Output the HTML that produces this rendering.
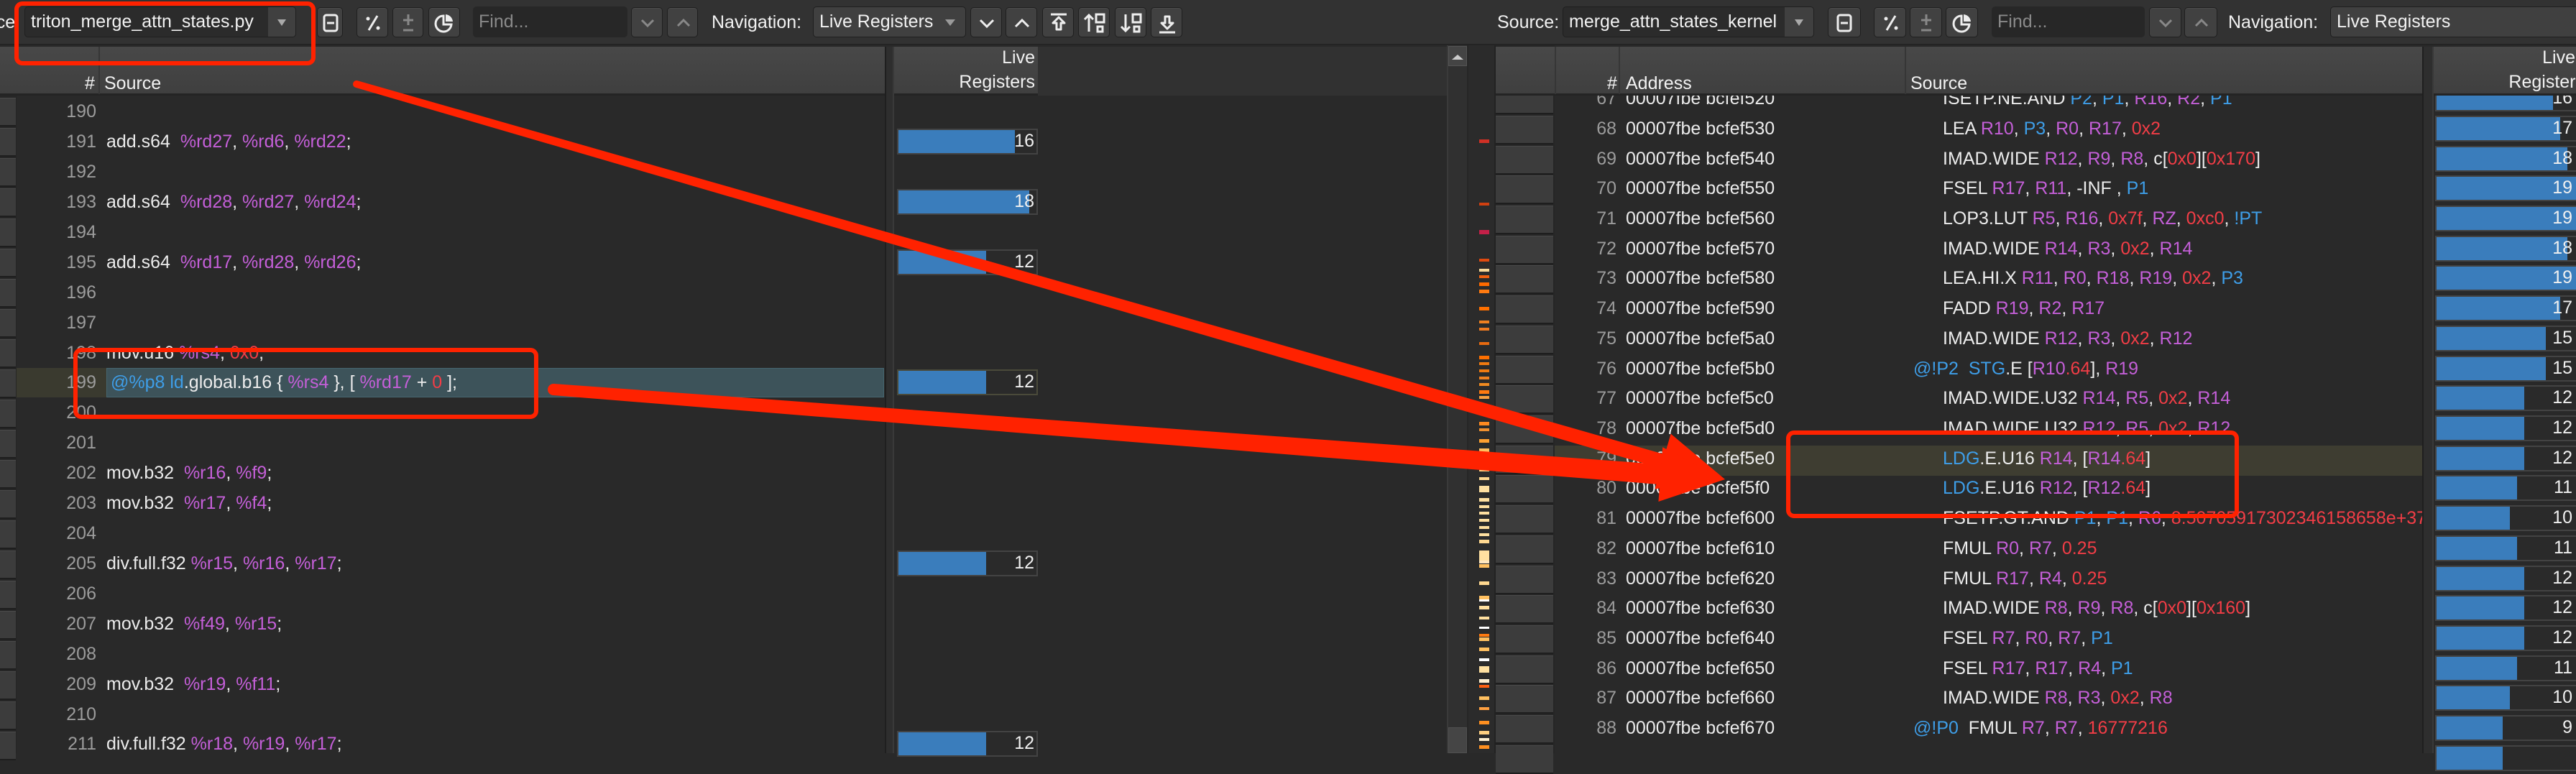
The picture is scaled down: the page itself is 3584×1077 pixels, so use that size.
<!DOCTYPE html>
<html><head><meta charset="utf-8"><style>
*{margin:0;padding:0;box-sizing:border-box}
body{width:3584px;height:1048px;background:#292929;position:relative;overflow:hidden;font-family:"Liberation Sans",sans-serif;color:#ececec;font-size:25px}
.a{position:absolute}
.tb{left:0;top:0;width:3584px;height:63px;background:#323232;border-bottom:2px solid #242424}
.btn{position:absolute;top:10px;height:42px;background:#414141;border:1px solid #1f1f1f;border-radius:5px;box-shadow:inset 0 1px 0 #4c4c4c}
.btn svg{position:absolute;left:0;top:0}
.dd{position:absolute;top:9px;height:43px;background:#2b2b2b;border:1px solid #1f1f1f;border-radius:5px;font-size:25px;line-height:41px;padding-left:8px;color:#f2f2f2;overflow:hidden;white-space:nowrap}
.ddb{background:#404040}
.find{position:absolute;top:9px;height:43px;background:#272727;border-radius:5px;color:#8a8a8a;font-size:25px;line-height:43px;padding-left:8px}
.lbl{position:absolute;top:0;line-height:62px;font-size:25px;color:#f2f2f2;white-space:nowrap}
.hdr{position:absolute;top:65px;height:68px;background:linear-gradient(#484848,#3f3f3f);border-bottom:3px solid #242424}
.ht{position:absolute;font-size:25px;color:#f2f2f2;white-space:nowrap}
.row{position:absolute;height:42px;line-height:42px;white-space:nowrap}
.ln{position:absolute;text-align:right;color:#9c9c9c}
.p{color:#c45fd8}.b{color:#3e9ee8}.r{color:#f23d46}
.gb{position:absolute;background:#3c3c3c;border-top:1px solid #4a4a4a;border-bottom:2px solid #1e1e1e}
.lb{position:absolute;height:36px;border:2px solid #434343;background:#2a2a2a}
.lb i{position:absolute;left:0;top:0;bottom:0;background:#3a7dbc}
.lb s{position:absolute;right:3px;top:-3px;text-decoration:none;line-height:36px;color:#f0f0f0}
.mm{position:absolute;left:2058px;width:14px}
</style></head><body>

<!-- toolbar -->
<div class="a tb"></div>
<div class="lbl" style="left:-58px">Source:</div>
<div class="dd" style="left:34px;width:378px">triton_merge_attn_states.py<div class="a ddb" style="right:0;top:0;width:38px;height:41px;"><svg width="38" height="41"><path d="M13 17h12l-6 9z" fill="#aaa"/></svg></div></div>
<div class="btn" style="left:441px;width:36px"><svg width="36" height="42"><rect x="9" y="10" width="18" height="22" rx="3" fill="none" stroke="#eee" stroke-width="3"/><path d="M13 21h10" stroke="#eee" stroke-width="3"/></svg></div>
<div class="btn" style="left:496px;width:44px"><svg width="44" height="42"><path d="M28 11L16 31" stroke="#eee" stroke-width="3"/><circle cx="15" cy="15" r="2.5" fill="#eee"/><circle cx="29" cy="28" r="2.5" fill="#eee"/></svg></div>
<div class="btn" style="left:546px;width:43px"><svg width="43" height="42"><path d="M21 9v15M14 17h14M14 31h14" stroke="#888" stroke-width="3"/></svg></div>
<div class="btn" style="left:596px;width:44px"><svg width="44" height="42"><path d="M20 11a11 11 0 1 0 11 12h-11z" fill="none" stroke="#eee" stroke-width="3"/><path d="M23 9a11 11 0 0 1 10 10h-10z" fill="#eee"/></svg></div>
<div class="find" style="left:658px;width:215px">Find...</div>
<div class="btn" style="left:878px;width:44px"><svg width="44" height="42"><path d="M14 17l8 8 8-8" fill="none" stroke="#888" stroke-width="3"/></svg></div>
<div class="btn" style="left:928px;width:43px"><svg width="43" height="42"><path d="M14 25l8-8 8 8" fill="none" stroke="#888" stroke-width="3"/></svg></div>
<div class="lbl" style="left:990px">Navigation:</div>
<div class="dd" style="left:1131px;width:213px;background:#404040">Live Registers<svg class="a" style="right:6px;top:0" width="30" height="41"><path d="M8 17h14l-7 9z" fill="#999"/></svg></div>
<div class="btn" style="left:1350px;width:44px"><svg width="44" height="42"><path d="M13 17l9 9 9-9" fill="none" stroke="#eee" stroke-width="3"/></svg></div>
<div class="btn" style="left:1399px;width:44px"><svg width="44" height="42"><path d="M13 26l9-9 9 9" fill="none" stroke="#eee" stroke-width="3"/></svg></div>
<div class="btn" style="left:1450px;width:44px"><svg width="44" height="42"><path d="M11 9h22M22 13l-8 8h5v9h6v-9h5z" fill="none" stroke="#eee" stroke-width="3" stroke-linejoin="round"/></svg></div>
<div class="btn" style="left:1500px;width:44px"><svg width="44" height="42"><path d="M14 33V10M8 16l6-6 6 6" fill="none" stroke="#eee" stroke-width="3"/><rect x="24" y="9" width="11" height="11" fill="none" stroke="#eee" stroke-width="3"/><rect x="26" y="26" width="7" height="7" fill="none" stroke="#eee" stroke-width="3"/></svg></div>
<div class="btn" style="left:1551px;width:44px"><svg width="44" height="42"><path d="M14 9v23M8 26l6 6 6-6" fill="none" stroke="#eee" stroke-width="3"/><rect x="24" y="9" width="11" height="11" fill="none" stroke="#eee" stroke-width="3"/><rect x="26" y="26" width="7" height="7" fill="none" stroke="#eee" stroke-width="3"/></svg></div>
<div class="btn" style="left:1601px;width:44px"><svg width="44" height="42"><path d="M11 34h22M22 29l-8-8h5v-9h6v9h5z" fill="none" stroke="#eee" stroke-width="3" stroke-linejoin="round"/></svg></div>

<div class="lbl" style="left:2083px">Source:</div>
<div class="dd" style="left:2174px;width:350px">merge_attn_states_kernel<div class="a ddb" style="right:0;top:0;width:40px;height:41px;"><svg width="40" height="41"><path d="M14 17h12l-6 9z" fill="#aaa"/></svg></div></div>
<div class="btn" style="left:2543px;width:46px"><svg width="46" height="42"><rect x="13" y="10" width="18" height="22" rx="3" fill="none" stroke="#eee" stroke-width="3"/><path d="M17 21h10" stroke="#eee" stroke-width="3"/></svg></div>
<div class="btn" style="left:2607px;width:45px"><svg width="45" height="42"><path d="M29 11L17 31" stroke="#eee" stroke-width="3"/><circle cx="16" cy="15" r="2.5" fill="#eee"/><circle cx="30" cy="28" r="2.5" fill="#eee"/></svg></div>
<div class="btn" style="left:2657px;width:45px"><svg width="45" height="42"><path d="M22 9v15M15 17h14M15 31h14" stroke="#888" stroke-width="3"/></svg></div>
<div class="btn" style="left:2707px;width:45px"><svg width="45" height="42"><path d="M21 11a11 11 0 1 0 11 12h-11z" fill="none" stroke="#eee" stroke-width="3"/><path d="M24 9a11 11 0 0 1 10 10h-10z" fill="#eee"/></svg></div>
<div class="find" style="left:2771px;width:213px">Find...</div>
<div class="btn" style="left:2990px;width:45px"><svg width="45" height="42"><path d="M14 17l8 8 8-8" fill="none" stroke="#888" stroke-width="3"/></svg></div>
<div class="btn" style="left:3039px;width:46px"><svg width="46" height="42"><path d="M15 25l8-8 8 8" fill="none" stroke="#888" stroke-width="3"/></svg></div>
<div class="lbl" style="left:3100px">Navigation:</div>
<div class="dd" style="left:3242px;width:360px;background:#404040">Live Registers</div>

<!-- LEFT PANEL -->
<div class="a" style="left:0;top:133px;width:23px;height:915px;background:#262626"></div>
<div class="hdr" style="left:0;width:1231px"></div>
<div class="a" style="left:137px;top:65px;width:2px;height:66px;background:#363636"></div>
<div class="ht" style="left:118px;top:102px">#</div>
<div class="ht" style="left:145px;top:102px">Source</div>
<div class="a" style="left:1231px;top:65px;width:13px;height:983px;background:#2e2e2e;border-left:2px solid #1f1f1f;border-right:2px solid #393939"></div>
<div class="hdr" style="left:1244px;width:200px"></div>
<div class="ht" style="left:1244px;width:196px;text-align:right;top:66px">Live</div>
<div class="ht" style="left:1244px;width:196px;text-align:right;top:100px">Registers</div>
<div class="a" style="left:1444px;top:65px;width:570px;height:68px;background:#313131"></div>

<!-- left gutter boxes -->
<div class="gb" style="left:0;top:136px;width:22px;height:40px"></div>
<div class="gb" style="left:0;top:178px;width:22px;height:40px"></div>
<div class="gb" style="left:0;top:220px;width:22px;height:40px"></div>
<div class="gb" style="left:0;top:262px;width:22px;height:40px"></div>
<div class="gb" style="left:0;top:304px;width:22px;height:40px"></div>
<div class="gb" style="left:0;top:346px;width:22px;height:40px"></div>
<div class="gb" style="left:0;top:388px;width:22px;height:40px"></div>
<div class="gb" style="left:0;top:430px;width:22px;height:40px"></div>
<div class="gb" style="left:0;top:472px;width:22px;height:40px"></div>
<div class="gb" style="left:0;top:514px;width:22px;height:40px"></div>
<div class="gb" style="left:0;top:556px;width:22px;height:40px"></div>
<div class="gb" style="left:0;top:598px;width:22px;height:40px"></div>
<div class="gb" style="left:0;top:640px;width:22px;height:40px"></div>
<div class="gb" style="left:0;top:682px;width:22px;height:40px"></div>
<div class="gb" style="left:0;top:724px;width:22px;height:40px"></div>
<div class="gb" style="left:0;top:766px;width:22px;height:40px"></div>
<div class="gb" style="left:0;top:808px;width:22px;height:40px"></div>
<div class="gb" style="left:0;top:850px;width:22px;height:40px"></div>
<div class="gb" style="left:0;top:892px;width:22px;height:40px"></div>
<div class="gb" style="left:0;top:934px;width:22px;height:40px"></div>
<div class="gb" style="left:0;top:976px;width:22px;height:40px"></div>
<div class="gb" style="left:0;top:1018px;width:22px;height:40px"></div>

<!-- highlight 199 -->
<div class="a" style="left:23px;top:512px;width:125px;height:41px;background:#3a3a2f"></div>
<div class="a" style="left:148px;top:512px;width:1082px;height:41px;background:#3d535a;border:1px solid #466670"></div>

<div class="row" style="left:0;top:134px"><span class="ln" style="left:40px;width:94px">190</span></div>
<div class="row" style="left:0;top:176px"><span class="ln" style="left:40px;width:94px">191</span><span class="a" style="left:148px">add.s64&nbsp; <span class="p">%rd27</span>, <span class="p">%rd6</span>, <span class="p">%rd22</span>;</span></div>
<div class="row" style="left:0;top:218px"><span class="ln" style="left:40px;width:94px">192</span></div>
<div class="row" style="left:0;top:260px"><span class="ln" style="left:40px;width:94px">193</span><span class="a" style="left:148px">add.s64&nbsp; <span class="p">%rd28</span>, <span class="p">%rd27</span>, <span class="p">%rd24</span>;</span></div>
<div class="row" style="left:0;top:302px"><span class="ln" style="left:40px;width:94px">194</span></div>
<div class="row" style="left:0;top:344px"><span class="ln" style="left:40px;width:94px">195</span><span class="a" style="left:148px">add.s64&nbsp; <span class="p">%rd17</span>, <span class="p">%rd28</span>, <span class="p">%rd26</span>;</span></div>
<div class="row" style="left:0;top:386px"><span class="ln" style="left:40px;width:94px">196</span></div>
<div class="row" style="left:0;top:428px"><span class="ln" style="left:40px;width:94px">197</span></div>
<div class="row" style="left:0;top:470px"><span class="ln" style="left:40px;width:94px">198</span><span class="a" style="left:148px">mov.u16 <span class="p">%rs4</span>, <span class="r">0x0</span>;</span></div>
<div class="row" style="left:0;top:511px"><span class="ln" style="left:40px;width:94px">199</span><span class="a" style="left:154px"><span class="b">@%p8</span> <span class="b">ld</span>.global.b16 { <span class="p">%rs4</span> }, [ <span class="p">%rd17</span> + <span class="r">0</span> ];</span></div>
<div class="row" style="left:0;top:553px"><span class="ln" style="left:40px;width:94px">200</span></div>
<div class="row" style="left:0;top:595px"><span class="ln" style="left:40px;width:94px">201</span></div>
<div class="row" style="left:0;top:637px"><span class="ln" style="left:40px;width:94px">202</span><span class="a" style="left:148px">mov.b32&nbsp; <span class="p">%r16</span>, <span class="p">%f9</span>;</span></div>
<div class="row" style="left:0;top:679px"><span class="ln" style="left:40px;width:94px">203</span><span class="a" style="left:148px">mov.b32&nbsp; <span class="p">%r17</span>, <span class="p">%f4</span>;</span></div>
<div class="row" style="left:0;top:721px"><span class="ln" style="left:40px;width:94px">204</span></div>
<div class="row" style="left:0;top:763px"><span class="ln" style="left:40px;width:94px">205</span><span class="a" style="left:148px">div.full.f32 <span class="p">%r15</span>, <span class="p">%r16</span>, <span class="p">%r17</span>;</span></div>
<div class="row" style="left:0;top:805px"><span class="ln" style="left:40px;width:94px">206</span></div>
<div class="row" style="left:0;top:847px"><span class="ln" style="left:40px;width:94px">207</span><span class="a" style="left:148px">mov.b32&nbsp; <span class="p">%f49</span>, <span class="p">%r15</span>;</span></div>
<div class="row" style="left:0;top:889px"><span class="ln" style="left:40px;width:94px">208</span></div>
<div class="row" style="left:0;top:931px"><span class="ln" style="left:40px;width:94px">209</span><span class="a" style="left:148px">mov.b32&nbsp; <span class="p">%r19</span>, <span class="p">%f11</span>;</span></div>
<div class="row" style="left:0;top:973px"><span class="ln" style="left:40px;width:94px">210</span></div>
<div class="row" style="left:0;top:1014px"><span class="ln" style="left:40px;width:94px">211</span><span class="a" style="left:148px">div.full.f32 <span class="p">%r18</span>, <span class="p">%r19</span>, <span class="p">%r17</span>;</span></div>

<div class="lb" style="left:1248px;top:179px;width:196px"><i style="width:162px"></i><s>16</s></div>
<div class="lb" style="left:1248px;top:263px;width:196px"><i style="width:182px"></i><s>18</s></div>
<div class="lb" style="left:1248px;top:347px;width:196px"><i style="width:122px"></i><s>12</s></div>
<div class="lb" style="left:1248px;top:514px;width:196px;border-color:#4a4a3a"><i style="width:122px"></i><s>12</s></div>
<div class="lb" style="left:1248px;top:766px;width:196px"><i style="width:122px"></i><s>12</s></div>
<div class="lb" style="left:1248px;top:1017px;width:196px"><i style="width:122px"></i><s>12</s></div>

<!-- scrollbar + minimap -->
<div class="a" style="left:2013px;top:63px;width:30px;height:985px;background:#303030;border-left:2px solid #3a3a3a;border-right:2px solid #262626"></div>
<div class="a" style="left:2015px;top:64px;width:26px;height:28px;background:#444;border:1px solid #555"><svg width="24" height="26"><path d="M4 18h16l-8-7z" fill="#ccc"/></svg></div>
<div class="a" style="left:2015px;top:1012px;width:26px;height:36px;background:#454545;border:1px solid #505050"></div>
<div class="a" style="left:2043px;top:63px;width:38px;height:985px;background:#2b2b2b;border-right:2px solid #222"></div>
<div class="mm" style="top:194px;height:5px;background:#d03025"></div>
<div class="mm" style="top:282px;height:4px;background:#d04010"></div>
<div class="mm" style="top:320px;height:6px;background:#c42048"></div>
<div class="mm" style="top:360px;height:4px;background:#e04a10"></div>
<div class="mm" style="top:374px;height:4px;background:#f8d898"></div>
<div class="mm" style="top:383px;height:4px;background:#f06010"></div>
<div class="mm" style="top:393px;height:5px;background:#ff6a00"></div>
<div class="mm" style="top:403px;height:5px;background:#ff7a10"></div>
<div class="mm" style="top:427px;height:5px;background:#ff7000"></div>
<div class="mm" style="top:446px;height:4px;background:#f08020"></div>
<div class="mm" style="top:456px;height:4px;background:#f07a20"></div>
<div class="mm" style="top:476px;height:4px;background:#e86a10"></div>
<div class="mm" style="top:495px;height:5px;background:#ff7000"></div>
<div class="mm" style="top:504px;height:4px;background:#f07a10"></div>
<div class="mm" style="top:514px;height:4px;background:#f07a10"></div>
<div class="mm" style="top:524px;height:4px;background:#f08020"></div>
<div class="mm" style="top:533px;height:4px;background:#f08a20"></div>
<div class="mm" style="top:543px;height:5px;background:#ff7a10"></div>
<div class="mm" style="top:551px;height:4px;background:#f8a040"></div>
<div class="mm" style="top:587px;height:5px;background:#ff8a20"></div>
<div class="mm" style="top:596px;height:4px;background:#f09030"></div>
<div class="mm" style="top:611px;height:5px;background:#ffa030"></div>
<div class="mm" style="top:624px;height:10px;background:#ffc060"></div>
<div class="mm" style="top:652px;height:4px;background:#ffd080"></div>
<div class="mm" style="top:664px;height:4px;background:#ffd890"></div>
<div class="mm" style="top:676px;height:9px;background:#ffe0a0"></div>
<div class="mm" style="top:693px;height:5px;background:#ffe0a0"></div>
<div class="mm" style="top:703px;height:4px;background:#ffe0a0"></div>
<div class="mm" style="top:712px;height:4px;background:#ffe0a0"></div>
<div class="mm" style="top:722px;height:4px;background:#ffe0a0"></div>
<div class="mm" style="top:732px;height:4px;background:#ffe0a0"></div>
<div class="mm" style="top:742px;height:4px;background:#ffe0a0"></div>
<div class="mm" style="top:751px;height:5px;background:#ffd890"></div>
<div class="mm" style="top:766px;height:14px;background:#ffe0a0"></div>
<div class="mm" style="top:780px;height:4px;background:#ffe8c0"></div>
<div class="mm" style="top:785px;height:5px;background:#ffc060"></div>
<div class="mm" style="top:809px;height:5px;background:#ffd890"></div>
<div class="mm" style="top:829px;height:5px;background:#ffc060"></div>
<div class="mm" style="top:834px;height:3px;background:#ffffff"></div>
<div class="mm" style="top:843px;height:5px;background:#ffe0a0"></div>
<div class="mm" style="top:858px;height:4px;background:#ffe0a0"></div>
<div class="mm" style="top:872px;height:3px;background:#ffffff"></div>
<div class="mm" style="top:882px;height:4px;background:#ff7a10"></div>
<div class="mm" style="top:887px;height:5px;background:#ffc060"></div>
<div class="mm" style="top:901px;height:5px;background:#ffc060"></div>
<div class="mm" style="top:916px;height:4px;background:#ffffff"></div>
<div class="mm" style="top:927px;height:9px;background:#ffe0a0"></div>
<div class="mm" style="top:945px;height:5px;background:#fff0d0"></div>
<div class="mm" style="top:953px;height:4px;background:#ff6010"></div>
<div class="mm" style="top:969px;height:5px;background:#ffc060"></div>
<div class="mm" style="top:984px;height:4px;background:#ffa040"></div>
<div class="mm" style="top:1003px;height:5px;background:#ff9020"></div>
<div class="mm" style="top:1017px;height:5px;background:#ffd080"></div>
<div class="mm" style="top:1027px;height:4px;background:#fff0d0"></div>
<div class="mm" style="top:1037px;height:5px;background:#ff9020"></div>

<!-- RIGHT PANEL -->
<div class="a" style="left:2081px;top:63px;width:82px;height:985px;background:#262626"></div>
<!-- highlight 79 -->
<div class="a" style="left:2163px;top:620px;width:1207px;height:42px;background:#3e3d31"></div>

<div class="row" style="left:0;top:116px"><span class="ln" style="left:2163px;width:86px">67</span><span class="a" style="left:2262px">00007fbe bcfef520</span><span class="a" style="left:2703px">ISETP.NE.AND <span class="b">P2</span>, <span class="b">P1</span>, <span class="p">R16</span>, <span class="p">R2</span>, <span class="b">P1</span></span></div>
<div class="row" style="left:0;top:158px"><span class="ln" style="left:2163px;width:86px">68</span><span class="a" style="left:2262px">00007fbe bcfef530</span><span class="a" style="left:2703px">LEA <span class="p">R10</span>, <span class="b">P3</span>, <span class="p">R0</span>, <span class="p">R17</span>, <span class="r">0x2</span></span></div>
<div class="row" style="left:0;top:200px"><span class="ln" style="left:2163px;width:86px">69</span><span class="a" style="left:2262px">00007fbe bcfef540</span><span class="a" style="left:2703px">IMAD.WIDE <span class="p">R12</span>, <span class="p">R9</span>, <span class="p">R8</span>, c[<span class="r">0x0</span>][<span class="r">0x170</span>]</span></div>
<div class="row" style="left:0;top:241px"><span class="ln" style="left:2163px;width:86px">70</span><span class="a" style="left:2262px">00007fbe bcfef550</span><span class="a" style="left:2703px">FSEL <span class="p">R17</span>, <span class="p">R11</span>, -INF , <span class="b">P1</span></span></div>
<div class="row" style="left:0;top:283px"><span class="ln" style="left:2163px;width:86px">71</span><span class="a" style="left:2262px">00007fbe bcfef560</span><span class="a" style="left:2703px">LOP3.LUT <span class="p">R5</span>, <span class="p">R16</span>, <span class="r">0x7f</span>, <span class="p">RZ</span>, <span class="r">0xc0</span>, <span class="b">!PT</span></span></div>
<div class="row" style="left:0;top:325px"><span class="ln" style="left:2163px;width:86px">72</span><span class="a" style="left:2262px">00007fbe bcfef570</span><span class="a" style="left:2703px">IMAD.WIDE <span class="p">R14</span>, <span class="p">R3</span>, <span class="r">0x2</span>, <span class="p">R14</span></span></div>
<div class="row" style="left:0;top:366px"><span class="ln" style="left:2163px;width:86px">73</span><span class="a" style="left:2262px">00007fbe bcfef580</span><span class="a" style="left:2703px">LEA.HI.X <span class="p">R11</span>, <span class="p">R0</span>, <span class="p">R18</span>, <span class="p">R19</span>, <span class="r">0x2</span>, <span class="b">P3</span></span></div>
<div class="row" style="left:0;top:408px"><span class="ln" style="left:2163px;width:86px">74</span><span class="a" style="left:2262px">00007fbe bcfef590</span><span class="a" style="left:2703px">FADD <span class="p">R19</span>, <span class="p">R2</span>, <span class="p">R17</span></span></div>
<div class="row" style="left:0;top:450px"><span class="ln" style="left:2163px;width:86px">75</span><span class="a" style="left:2262px">00007fbe bcfef5a0</span><span class="a" style="left:2703px">IMAD.WIDE <span class="p">R12</span>, <span class="p">R3</span>, <span class="r">0x2</span>, <span class="p">R12</span></span></div>
<div class="row" style="left:0;top:492px"><span class="ln" style="left:2163px;width:86px">76</span><span class="a" style="left:2262px">00007fbe bcfef5b0</span><span class="a" style="left:2662px"><span class="b">@!P2</span>&nbsp; <span class="b">STG</span>.E [<span class="p">R10</span><span class="r">.64</span>], <span class="p">R19</span></span></div>
<div class="row" style="left:0;top:533px"><span class="ln" style="left:2163px;width:86px">77</span><span class="a" style="left:2262px">00007fbe bcfef5c0</span><span class="a" style="left:2703px">IMAD.WIDE.U32 <span class="p">R14</span>, <span class="p">R5</span>, <span class="r">0x2</span>, <span class="p">R14</span></span></div>
<div class="row" style="left:0;top:575px"><span class="ln" style="left:2163px;width:86px">78</span><span class="a" style="left:2262px">00007fbe bcfef5d0</span><span class="a" style="left:2703px">IMAD.WIDE.U32 <span class="p">R12</span>, <span class="p">R5</span>, <span class="r">0x2</span>, <span class="p">R12</span></span></div>
<div class="row" style="left:0;top:617px"><span class="ln" style="left:2163px;width:86px">79</span><span class="a" style="left:2262px">00007fbe bcfef5e0</span><span class="a" style="left:2703px"><span class="b">LDG</span>.E.U16 <span class="p">R14</span>, [<span class="p">R14</span><span class="r">.64</span>]</span></div>
<div class="row" style="left:0;top:658px"><span class="ln" style="left:2163px;width:86px">80</span><span class="a" style="left:2262px">00007fbe bcfef5f0</span><span class="a" style="left:2703px"><span class="b">LDG</span>.E.U16 <span class="p">R12</span>, [<span class="p">R12</span><span class="r">.64</span>]</span></div>
<div class="row" style="left:0;top:700px;width:3370px;overflow:hidden"><span class="ln" style="left:2163px;width:86px">81</span><span class="a" style="left:2262px">00007fbe bcfef600</span><span class="a" style="left:2703px">FSETP.GT.AND <span class="b">P1</span>, <span class="b">P1</span>, <span class="p">R6</span>, <span class="r">8.50705917302346158658e+37</span></span></div>
<div class="row" style="left:0;top:742px"><span class="ln" style="left:2163px;width:86px">82</span><span class="a" style="left:2262px">00007fbe bcfef610</span><span class="a" style="left:2703px">FMUL <span class="p">R0</span>, <span class="p">R7</span>, <span class="r">0.25</span></span></div>
<div class="row" style="left:0;top:784px"><span class="ln" style="left:2163px;width:86px">83</span><span class="a" style="left:2262px">00007fbe bcfef620</span><span class="a" style="left:2703px">FMUL <span class="p">R17</span>, <span class="p">R4</span>, <span class="r">0.25</span></span></div>
<div class="row" style="left:0;top:825px"><span class="ln" style="left:2163px;width:86px">84</span><span class="a" style="left:2262px">00007fbe bcfef630</span><span class="a" style="left:2703px">IMAD.WIDE <span class="p">R8</span>, <span class="p">R9</span>, <span class="p">R8</span>, c[<span class="r">0x0</span>][<span class="r">0x160</span>]</span></div>
<div class="row" style="left:0;top:867px"><span class="ln" style="left:2163px;width:86px">85</span><span class="a" style="left:2262px">00007fbe bcfef640</span><span class="a" style="left:2703px">FSEL <span class="p">R7</span>, <span class="p">R0</span>, <span class="p">R7</span>, <span class="b">P1</span></span></div>
<div class="row" style="left:0;top:909px"><span class="ln" style="left:2163px;width:86px">86</span><span class="a" style="left:2262px">00007fbe bcfef650</span><span class="a" style="left:2703px">FSEL <span class="p">R17</span>, <span class="p">R17</span>, <span class="p">R4</span>, <span class="b">P1</span></span></div>
<div class="row" style="left:0;top:950px"><span class="ln" style="left:2163px;width:86px">87</span><span class="a" style="left:2262px">00007fbe bcfef660</span><span class="a" style="left:2703px">IMAD.WIDE <span class="p">R8</span>, <span class="p">R3</span>, <span class="r">0x2</span>, <span class="p">R8</span></span></div>
<div class="row" style="left:0;top:992px"><span class="ln" style="left:2163px;width:86px">88</span><span class="a" style="left:2262px">00007fbe bcfef670</span><span class="a" style="left:2662px"><span class="b">@!P0</span>&nbsp; FMUL <span class="p">R7</span>, <span class="p">R7</span>, <span class="r">16777216</span></span></div>

<!-- right gutter boxes -->
<div class="gb" style="left:2081px;top:119px;width:80px;height:40px"></div>
<div class="gb" style="left:2081px;top:161px;width:80px;height:40px"></div>
<div class="gb" style="left:2081px;top:203px;width:80px;height:40px"></div>
<div class="gb" style="left:2081px;top:244px;width:80px;height:40px"></div>
<div class="gb" style="left:2081px;top:286px;width:80px;height:40px"></div>
<div class="gb" style="left:2081px;top:328px;width:80px;height:40px"></div>
<div class="gb" style="left:2081px;top:369px;width:80px;height:40px"></div>
<div class="gb" style="left:2081px;top:411px;width:80px;height:40px"></div>
<div class="gb" style="left:2081px;top:453px;width:80px;height:40px"></div>
<div class="gb" style="left:2081px;top:495px;width:80px;height:40px"></div>
<div class="gb" style="left:2081px;top:536px;width:80px;height:40px"></div>
<div class="gb" style="left:2081px;top:578px;width:80px;height:40px"></div>
<div class="gb" style="left:2081px;top:620px;width:80px;height:40px"></div>
<div class="gb" style="left:2081px;top:661px;width:80px;height:40px"></div>
<div class="gb" style="left:2081px;top:703px;width:80px;height:40px"></div>
<div class="gb" style="left:2081px;top:745px;width:80px;height:40px"></div>
<div class="gb" style="left:2081px;top:787px;width:80px;height:40px"></div>
<div class="gb" style="left:2081px;top:828px;width:80px;height:40px"></div>
<div class="gb" style="left:2081px;top:870px;width:80px;height:40px"></div>
<div class="gb" style="left:2081px;top:912px;width:80px;height:40px"></div>
<div class="gb" style="left:2081px;top:953px;width:80px;height:40px"></div>
<div class="gb" style="left:2081px;top:995px;width:80px;height:40px"></div>
<div class="gb" style="left:2081px;top:1037px;width:80px;height:40px"></div>

<!-- right separator and live regs -->
<div class="a" style="left:3370px;top:65px;width:16px;height:983px;background:#2e2e2e;border-left:2px solid #1f1f1f;border-right:2px solid #393939"></div>
<div class="lb" style="left:3388px;top:119px;width:200px"><i style="width:162px"></i><s style="right:7px">16</s></div>
<div class="lb" style="left:3388px;top:161px;width:200px"><i style="width:172px"></i><s style="right:7px">17</s></div>
<div class="lb" style="left:3388px;top:203px;width:200px"><i style="width:182px"></i><s style="right:7px">18</s></div>
<div class="lb" style="left:3388px;top:244px;width:200px"><i style="width:194px"></i><s style="right:7px">19</s></div>
<div class="lb" style="left:3388px;top:286px;width:200px"><i style="width:194px"></i><s style="right:7px">19</s></div>
<div class="lb" style="left:3388px;top:328px;width:200px"><i style="width:182px"></i><s style="right:7px">18</s></div>
<div class="lb" style="left:3388px;top:369px;width:200px"><i style="width:194px"></i><s style="right:7px">19</s></div>
<div class="lb" style="left:3388px;top:411px;width:200px"><i style="width:172px"></i><s style="right:7px">17</s></div>
<div class="lb" style="left:3388px;top:453px;width:200px"><i style="width:152px"></i><s style="right:7px">15</s></div>
<div class="lb" style="left:3388px;top:495px;width:200px"><i style="width:152px"></i><s style="right:7px">15</s></div>
<div class="lb" style="left:3388px;top:536px;width:200px"><i style="width:122px"></i><s style="right:7px">12</s></div>
<div class="lb" style="left:3388px;top:578px;width:200px"><i style="width:122px"></i><s style="right:7px">12</s></div>
<div class="lb" style="left:3388px;top:620px;width:200px"><i style="width:122px"></i><s style="right:7px">12</s></div>
<div class="lb" style="left:3388px;top:661px;width:200px"><i style="width:112px"></i><s style="right:7px">11</s></div>
<div class="lb" style="left:3388px;top:703px;width:200px"><i style="width:102px"></i><s style="right:7px">10</s></div>
<div class="lb" style="left:3388px;top:745px;width:200px"><i style="width:112px"></i><s style="right:7px">11</s></div>
<div class="lb" style="left:3388px;top:787px;width:200px"><i style="width:122px"></i><s style="right:7px">12</s></div>
<div class="lb" style="left:3388px;top:828px;width:200px"><i style="width:122px"></i><s style="right:7px">12</s></div>
<div class="lb" style="left:3388px;top:870px;width:200px"><i style="width:122px"></i><s style="right:7px">12</s></div>
<div class="lb" style="left:3388px;top:912px;width:200px"><i style="width:112px"></i><s style="right:7px">11</s></div>
<div class="lb" style="left:3388px;top:953px;width:200px"><i style="width:102px"></i><s style="right:7px">10</s></div>
<div class="lb" style="left:3388px;top:995px;width:200px"><i style="width:92px"></i><s style="right:7px">9</s></div>
<div class="lb" style="left:3388px;top:1037px;width:200px"><i style="width:92px"></i></div>

<!-- right header -->
<div class="hdr" style="left:2081px;width:1289px"></div>
<div class="a" style="left:2163px;top:65px;width:2px;height:66px;background:#363636"></div>
<div class="a" style="left:2252px;top:65px;width:2px;height:66px;background:#363636"></div>
<div class="a" style="left:2650px;top:65px;width:2px;height:66px;background:#363636"></div>
<div class="ht" style="left:2236px;top:102px">#</div>
<div class="ht" style="left:2262px;top:102px">Address</div>
<div class="ht" style="left:2658px;top:102px">Source</div>
<div class="hdr" style="left:3386px;width:198px"></div>
<div class="ht" style="left:3386px;width:197px;text-align:right;top:66px">Live</div>
<div class="ht" style="left:3386px;width:210px;text-align:right;top:100px">Registers</div>

<!-- annotations -->
<svg class="a" style="left:0;top:0" width="3584" height="1048">
<g fill="none" stroke="#ff2200" stroke-width="6">
<rect x="23" y="5" width="413" height="83" rx="8"/>
<rect x="105" y="487" width="641" height="93" rx="8"/>
<rect x="2488" y="602" width="624" height="116" rx="8"/>
</g>
<g fill="#ff2200">
<polygon points="494.6,121.8 497.4,112.2 2316.3,632.4 2324.6,603.6 2400,667 2302.4,680.4 2310.7,651.6"/>
<polygon points="769.4,550 770.6,534 2311.4,646.1 2313.2,622.2 2400,667 2307.4,698 2309.2,674.1"/>
<circle cx="496" cy="117" r="5"/><circle cx="770" cy="542" r="8"/>
</g>
</svg>
</body></html>
